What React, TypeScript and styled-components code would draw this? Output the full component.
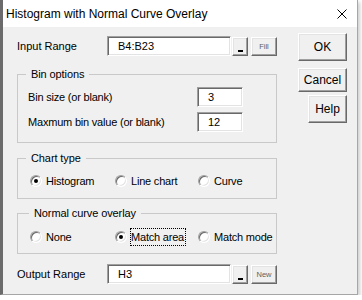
import React from 'react'
import styled, { createGlobalStyle } from 'styled-components'

const GlobalStyle = createGlobalStyle`
  html, body {
    margin: 0;
    padding: 0;
    background: #ffffff;
  }
  body {
    font-family: 'Liberation Sans', Arial, sans-serif;
    color: #000;
  }
`

const Window = styled.div`
  box-sizing: border-box;
  width: 358px;
  height: 295px;
  display: flex;
  flex-direction: column;
  background: #f0f0f0;
  border-left: 3px solid #6b6b6b;
  border-right: 1px solid #a6a6a6;
  border-bottom: 1px solid #a6a6a6;
  box-shadow: 2px 2px 4px rgba(0, 0, 0, 0.2);
`

const TitleBar = styled.div`
  height: 27px;
  flex: none;
  background: #ffffff;
  display: flex;
  align-items: center;
  justify-content: space-between;
  padding: 0 10px 0 3px;
  font-size: 12px;
`

const Body = styled.div`
  display: grid;
  grid-template-columns: 260px 49px;
  column-gap: 21px;
  padding: 6px 0 0 14px;
`

const MainColumn = styled.div`
  display: flex;
  flex-direction: column;
  padding-top: 3px;
`

const SideColumn = styled.div`
  display: flex;
  flex-direction: column;
  align-items: flex-end;
`

const RangeRow = styled.div<{ $top?: number }>`
  display: flex;
  align-items: center;
  height: 20px;
  margin-top: ${p => p.$top ?? 0}px;
`

const Label = styled.span`
  font-size: 11px;
  line-height: 14px;
  letter-spacing: -0.2px;
  white-space: nowrap;
`

const RangeLabel = styled(Label)`
  width: 90px;
  flex: none;
  letter-spacing: 0;
`

const TextBox = styled.div<{ $width: number }>`
  box-sizing: border-box;
  width: ${p => p.$width}px;
  height: 20px;
  background: #ffffff;
  border: 1px solid;
  border-color: #a0a0a0 #ffffff #ffffff #a0a0a0;
  box-shadow: inset 1px 1px 0 #696969, inset -1px -1px 0 #e3e3e3;
  padding-left: 10px;
  font-size: 11px;
  display: flex;
  align-items: center;
  flex: none;
`

const Raised = styled.div`
  box-sizing: border-box;
  background: #f0f0f0;
  border: 1px solid;
  border-color: #ffffff #696969 #696969 #ffffff;
  box-shadow: inset -1px -1px 0 #a0a0a0, inset 1px 1px 0 #e3e3e3;
  display: flex;
  align-items: center;
  justify-content: center;
  flex: none;
`

const PickButton = styled(Raised)`
  width: 16px;
  height: 19px;
  margin-left: 1px;
  align-items: flex-end;
  padding-bottom: 3px;

  &::after {
    content: '';
    width: 5px;
    height: 2px;
    background: #000;
  }
`

const TinyButton = styled(Raised)`
  width: 26px;
  height: 19px;
  margin-left: 3px;
  font-size: 7.5px;
  color: #5f5f5f;
`

const DialogButton = styled(Raised)<{ $width: number; $height: number; $top: number }>`
  width: ${p => p.$width}px;
  height: ${p => p.$height}px;
  margin-top: ${p => p.$top}px;
  font-size: 12px;
`

const Group = styled.fieldset<{ $top: number }>`
  margin: ${p => p.$top}px 0 0;
  padding: 0;
  border: 1px solid #c9c9c9;
  min-width: 0;
`

const Caption = styled.legend<{ $indent: number }>`
  margin-left: ${p => p.$indent}px;
  padding: 0 5px;
  font-size: 11px;
  line-height: 14px;
  letter-spacing: -0.1px;
`

const BinGrid = styled.div`
  display: grid;
  grid-template-columns: 1fr 46px;
  row-gap: 5px;
  align-items: center;
  padding: 6px 33px 10px 10px;
`

const RadioRow = styled.div<{ $top: number; $bottom: number }>`
  display: grid;
  grid-template-columns: 85px 83px auto;
  align-items: center;
  height: 16px;
  padding: ${p => p.$top}px 0 ${p => p.$bottom}px 12px;
`

const RadioItem = styled.div`
  display: flex;
  align-items: center;
  gap: 3px;
`

const RadioCircle = styled.span<{ $checked?: boolean }>`
  box-sizing: border-box;
  width: 12px;
  height: 12px;
  border-radius: 50%;
  background: #ffffff;
  border: 1px solid;
  border-color: #a0a0a0 #ffffff #ffffff #a0a0a0;
  box-shadow: inset 1px 1px 0 #696969, inset -1px -1px 0 #e3e3e3;
  display: flex;
  align-items: center;
  justify-content: center;
  flex: none;

  &::after {
    content: '';
    display: ${p => (p.$checked ? 'block' : 'none')};
    width: 4px;
    height: 4px;
    border-radius: 50%;
    background: #000;
  }
`

const RadioText = styled(Label)<{ $focused?: boolean }>`
  box-sizing: border-box;
  border: 1px dotted ${p => (p.$focused ? '#000' : 'transparent')};
  padding: 1px 1px 1px 0;
`

const Radio = ({ label, checked, focused }: { label: string; checked?: boolean; focused?: boolean }) => (
  <RadioItem>
    <RadioCircle $checked={checked} />
    <RadioText $focused={focused}>{label}</RadioText>
  </RadioItem>
)

const CloseIcon = () => (
  <svg width="10" height="10" viewBox="0 0 10 10">
    <path d="M0.5 0.5 L9.5 9.5 M9.5 0.5 L0.5 9.5" stroke="#000" strokeWidth="1" fill="none" />
  </svg>
)

const App = () => {
  return (
    <>
      <GlobalStyle />
      <Window>
        <TitleBar>
          <span>Histogram with Normal Curve Overlay</span>
          <CloseIcon />
        </TitleBar>
        <Body>
          <MainColumn>
            <RangeRow>
              <RangeLabel>Input Range</RangeLabel>
              <TextBox $width={124}>B4:B23</TextBox>
              <PickButton />
              <TinyButton>Fill</TinyButton>
            </RangeRow>

            <Group $top={11}>
              <Caption $indent={8}>Bin options</Caption>
              <BinGrid>
                <Label>Bin size (or blank)</Label>
                <TextBox $width={46}>3</TextBox>
                <Label>Maxmum bin value (or blank)</Label>
                <TextBox $width={46}>12</TextBox>
              </BinGrid>
            </Group>

            <Group $top={8}>
              <Caption $indent={8}>Chart type</Caption>
              <RadioRow $top={7} $bottom={10}>
                <Radio label="Histogram" checked />
                <Radio label="Line chart" />
                <Radio label="Curve" />
              </RadioRow>
            </Group>

            <Group $top={7}>
              <Caption $indent={11}>Normal curve overlay</Caption>
              <RadioRow $top={8} $bottom={9}>
                <Radio label="None" />
                <Radio label="Match area" checked focused />
                <Radio label="Match mode" />
              </RadioRow>
            </Group>

            <RangeRow $top={10}>
              <RangeLabel>Output Range</RangeLabel>
              <TextBox $width={124}>H3</TextBox>
              <PickButton />
              <TinyButton>New</TinyButton>
            </RangeRow>
          </MainColumn>

          <SideColumn>
            <DialogButton $width={49} $height={28} $top={0}>OK</DialogButton>
            <DialogButton $width={49} $height={24} $top={7}>Cancel</DialogButton>
            <DialogButton $width={39} $height={28} $top={3}>Help</DialogButton>
          </SideColumn>
        </Body>
      </Window>
    </>
  )
}

export default App
